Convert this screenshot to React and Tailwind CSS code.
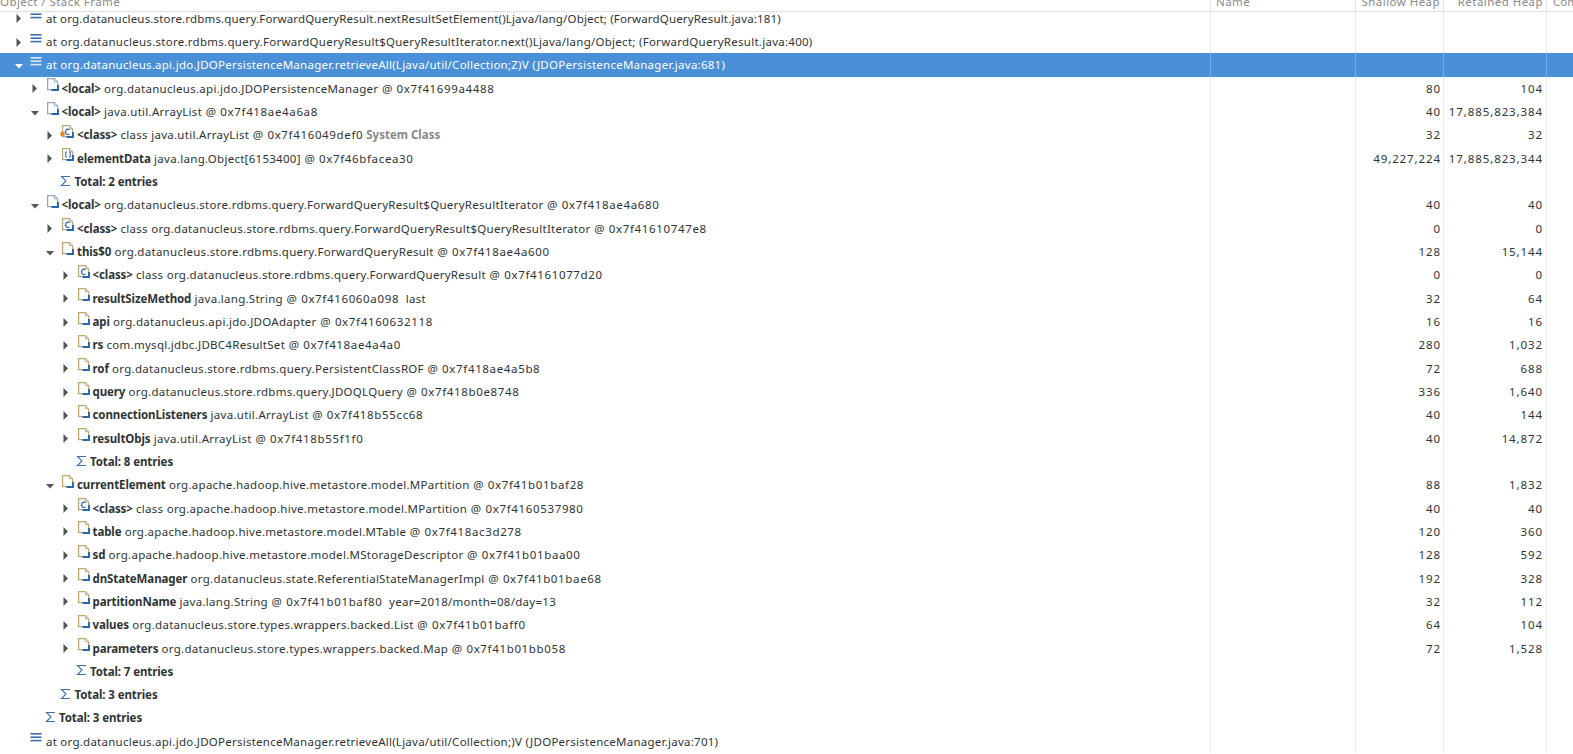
const PAD = ["pl-[11px]", "pl-[26.5px]", "pl-[42px]", "pl-[57.5px]"];

const rows = [
  { l: 0, a: "r", i: "stack", tk: "tracking-[0.17px]", t: "at org.datanucleus.store.rdbms.query.ForwardQueryResult.nextResultSetElement()Ljava/lang/Object; (ForwardQueryResult.java:181)" },
  { l: 0, a: "r", i: "stack", tk: "tracking-[0.27px]", t: "at org.datanucleus.store.rdbms.query.ForwardQueryResult$QueryResultIterator.next()Ljava/lang/Object; (ForwardQueryResult.java:400)" },
  { l: 0, a: "d", i: "stack", tk: "tracking-[0.25px]", sel: true, t: "at org.datanucleus.api.jdo.JDOPersistenceManager.retrieveAll(Ljava/util/Collection;Z)V (JDOPersistenceManager.java:681)" },
  { l: 1, a: "r", i: "local", b: "<local>", t: " org.datanucleus.api.jdo.JDOPersistenceManager", ad: " @ 0x7f41699a4488", s: "80", r: "104" },
  { l: 1, a: "d", i: "local", b: "<local>", t: " java.util.ArrayList", ad: " @ 0x7f418ae4a6a8", s: "40", r: "17,885,823,384" },
  { l: 2, a: "r", i: "sysclass", b: "<class>", t: " class java.util.ArrayList", ad: " @ 0x7f416049def0", g: " System Class", s: "32", r: "32" },
  { l: 2, a: "r", i: "array", b: "elementData", t: " java.lang.Object[6153400]", ad: " @ 0x7f46bfacea30", s: "49,227,224", r: "17,885,823,344" },
  { l: 2, i: "sum", b: "Total: 2 entries" },
  { l: 1, a: "d", i: "local", b: "<local>", t: " org.datanucleus.store.rdbms.query.ForwardQueryResult$QueryResultIterator", ad: " @ 0x7f418ae4a680", s: "40", r: "40" },
  { l: 2, a: "r", i: "class", b: "<class>", t: " class org.datanucleus.store.rdbms.query.ForwardQueryResult$QueryResultIterator", ad: " @ 0x7f41610747e8", s: "0", r: "0" },
  { l: 2, a: "d", i: "field", b: "this$0", t: " org.datanucleus.store.rdbms.query.ForwardQueryResult", ad: " @ 0x7f418ae4a600", s: "128", r: "15,144" },
  { l: 3, a: "r", i: "class", b: "<class>", t: " class org.datanucleus.store.rdbms.query.ForwardQueryResult", ad: " @ 0x7f4161077d20", s: "0", r: "0" },
  { l: 3, a: "r", i: "field", b: "resultSizeMethod", t: " java.lang.String", ad: " @ 0x7f416060a098", e: "  last", s: "32", r: "64" },
  { l: 3, a: "r", i: "field", b: "api", t: " org.datanucleus.api.jdo.JDOAdapter", ad: " @ 0x7f4160632118", s: "16", r: "16" },
  { l: 3, a: "r", i: "field", b: "rs", t: " com.mysql.jdbc.JDBC4ResultSet", ad: " @ 0x7f418ae4a4a0", s: "280", r: "1,032" },
  { l: 3, a: "r", i: "field", b: "rof", t: " org.datanucleus.store.rdbms.query.PersistentClassROF", ad: " @ 0x7f418ae4a5b8", s: "72", r: "688" },
  { l: 3, a: "r", i: "field", b: "query", t: " org.datanucleus.store.rdbms.query.JDOQLQuery", ad: " @ 0x7f418b0e8748", s: "336", r: "1,640" },
  { l: 3, a: "r", i: "field", b: "connectionListeners", t: " java.util.ArrayList", ad: " @ 0x7f418b55cc68", s: "40", r: "144" },
  { l: 3, a: "r", i: "field", b: "resultObjs", t: " java.util.ArrayList", ad: " @ 0x7f418b55f1f0", s: "40", r: "14,872" },
  { l: 3, i: "sum", b: "Total: 8 entries" },
  { l: 2, a: "d", i: "field", b: "currentElement", t: " org.apache.hadoop.hive.metastore.model.MPartition", ad: " @ 0x7f41b01baf28", s: "88", r: "1,832" },
  { l: 3, a: "r", i: "class", b: "<class>", t: " class org.apache.hadoop.hive.metastore.model.MPartition", ad: " @ 0x7f4160537980", s: "40", r: "40" },
  { l: 3, a: "r", i: "field", b: "table", t: " org.apache.hadoop.hive.metastore.model.MTable", ad: " @ 0x7f418ac3d278", s: "120", r: "360" },
  { l: 3, a: "r", i: "field", b: "sd", t: " org.apache.hadoop.hive.metastore.model.MStorageDescriptor", ad: " @ 0x7f41b01baa00", s: "128", r: "592" },
  { l: 3, a: "r", i: "field", b: "dnStateManager", t: " org.datanucleus.state.ReferentialStateManagerImpl", ad: " @ 0x7f41b01bae68", s: "192", r: "328" },
  { l: 3, a: "r", i: "field", b: "partitionName", t: " java.lang.String", ad: " @ 0x7f41b01baf80", e: "  year=2018/month=08/day=13", s: "32", r: "112" },
  { l: 3, a: "r", i: "field", b: "values", t: " org.datanucleus.store.types.wrappers.backed.List", ad: " @ 0x7f41b01baff0", s: "64", r: "104" },
  { l: 3, a: "r", i: "field", b: "parameters", t: " org.datanucleus.store.types.wrappers.backed.Map", ad: " @ 0x7f41b01bb058", s: "72", r: "1,528" },
  { l: 3, i: "sum", b: "Total: 7 entries" },
  { l: 2, i: "sum", b: "Total: 3 entries" },
  { l: 1, i: "sum", b: "Total: 3 entries" },
  { l: 0, i: "stack", tk: "tracking-[0.25px]", t: "at org.datanucleus.api.jdo.JDOPersistenceManager.retrieveAll(Ljava/util/Collection;)V (JDOPersistenceManager.java:701)" },
];

function Arrow({ dir, sel }) {
  if (!dir) return <span className="w-[18px] shrink-0" />;
  const fill = sel ? "#ffffff" : "#555753";
  return (
    <span className="w-[18px] shrink-0 flex">
      <svg width="16" height="16" viewBox="0 0 16 16" className="shrink-0">
        {dir === "r" ? <path d="M5.5 4 L10 8.5 L5.5 13 Z" fill={fill} /> : <path d="M4 7 L12 7 L8 11.5 Z" fill={fill} />}
      </svg>
    </span>
  );
}

function Page({ tint, children }) {
  return (
    <>
      <path d="M2.6 1.6 H9.5 L12.6 4.7 V12.6 H2.6 Z" fill="#fbfcfe" stroke={tint} strokeWidth="1.2" />
      <path d="M9.5 1.6 V4.7 H12.6" fill="#dfe6ef" stroke={tint} strokeWidth="0.9" />
      <path d="M13 8 V13 H6.5" fill="none" stroke="#2a66ad" strokeWidth="1.9" />
      {children}
    </>
  );
}

function Icon({ kind, sel }) {
  let body = null;
  if (kind === "stack") {
    const c = sel ? "#dbe8f7" : "#3f6fa8";
    body = (
      <>
        <rect x="1.5" y="3" width="11" height="1.6" fill={c} />
        <rect x="1.5" y="6.4" width="11" height="1.6" fill={c} />
        <rect x="1.5" y="9.8" width="11" height="1.6" fill={c} />
      </>
    );
  } else if (kind === "local") {
    body = <Page tint="#98a5b8" />;
  } else if (kind === "field") {
    body = <Page tint="#bfa76e" />;
  } else if (kind === "class" || kind === "sysclass") {
    body = (
      <Page tint="#b9a878">
        <path d="M9.4 5.8 A2.3 2.7 0 1 0 9.4 9.8" fill="none" stroke="#2f5fb0" strokeWidth="1.2" />
        {kind === "sysclass" && <circle cx="2.5" cy="10" r="2.4" fill="#e08a2c" />}
      </Page>
    );
  } else if (kind === "array") {
    body = (
      <Page tint="#b9a878">
        <path d="M7 5 H5.8 V10 H7 M9 5 H10.2 V10 H9" fill="none" stroke="#2f5fb0" strokeWidth="1" />
      </Page>
    );
  }
  return (
    <span className="w-[17px] shrink-0 flex">
      <svg width="14" height="16" viewBox="0 0 14 16" className="shrink-0 -translate-y-[3px]">
        {body}
      </svg>
    </span>
  );
}

function Sigma() {
  return (
    <span className="w-[14.5px] shrink-0 flex">
      <svg width="12" height="14" viewBox="0 0 12 14" className="shrink-0 -translate-y-[1px]">
        <path d="M10 2.5 H1.5 L6 7 L1.5 11.5 H10" fill="none" stroke="#3f6fa8" strokeWidth="1.1" />
      </svg>
    </span>
  );
}

function Row({ row }) {
  const sel = row.sel;
  const line = sel ? "border-[#79ace6]" : "border-[#ececec]";
  const txt = sel ? "text-white" : "text-[#2e3436]";
  return (
    <div className={`grid grid-cols-[1211px_145px_88px_103px_1fr] h-[23.33px] items-stretch ${sel ? "bg-[#4a90d9]" : ""} ${txt}`}>
      <div className={`flex items-center whitespace-pre overflow-hidden border-r ${line} ${PAD[row.l]}`}>
        {row.i === "sum" ? (
          <>
            <span className="w-[18px] shrink-0" />
            <Sigma />
          </>
        ) : (
          <>
            <Arrow dir={row.a} sel={sel} />
            <Icon kind={row.i} sel={sel} />
          </>
        )}
        <span className={row.tk || "tracking-[0.28px]"}>
          {row.b && <span className="font-bold tracking-[-0.1px]">{row.b}</span>}
          {row.t}
          {row.ad && <span className="tracking-[0.65px]">{row.ad}</span>}
          {row.e}
          {row.g && <span className="font-bold text-[#888a85] tracking-normal">{row.g}</span>}
        </span>
      </div>
      <div className={`border-r ${line}`} />
      <div className={`flex items-center justify-end pr-[2px] border-r tracking-[0.9px] ${line}`}>{row.s}</div>
      <div className={`flex items-center justify-end pr-[3px] border-r tracking-[0.9px] ${line}`}>{row.r}</div>
      <div />
    </div>
  );
}

export default function App() {
  const head = "border-r border-[#e4e4e4] overflow-hidden whitespace-nowrap text-[#8a8a8a] tracking-[0.45px]";
  return (
    <div className="h-[754px] w-full overflow-hidden bg-white text-[11.5px] font-['Noto_Sans',sans-serif]">
      <div className="relative z-10 grid grid-cols-[1211px_145px_88px_103px_1fr] h-[12px] bg-white border-b border-[#e0e0e0]">
        <div className={`${head} leading-[4px]`}>Object / Stack Frame</div>
        <div className={`${head} pl-[5px] leading-[4px]`}>Name</div>
        <div className={`${head} text-right pr-[3px] leading-[4px]`}>Shallow Heap</div>
        <div className={`${head} text-right pr-[3px] leading-[4px]`}>Retained Heap</div>
        <div className="overflow-hidden whitespace-nowrap text-[#8a8a8a] pl-[6px] leading-[4px]">Com</div>
      </div>
      <div className="-mt-[5.4px]">
        {rows.map((r, i) => (
          <Row key={i} row={r} />
        ))}
      </div>
    </div>
  );
}
